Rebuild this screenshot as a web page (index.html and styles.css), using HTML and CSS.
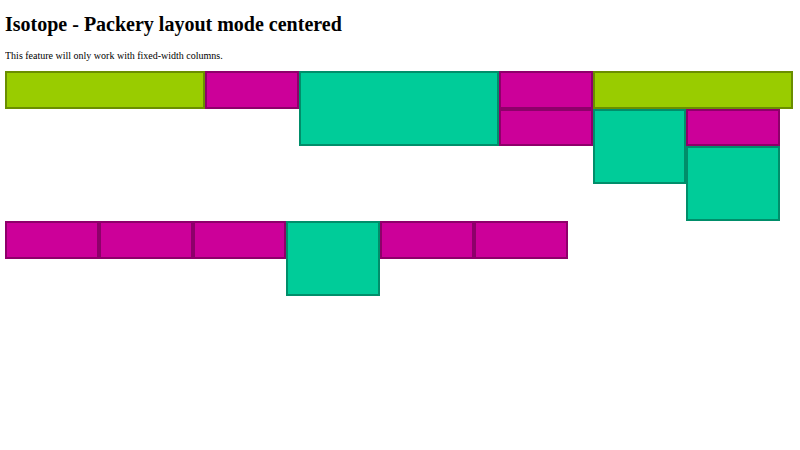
FILE: index.html
```html
<!DOCTYPE html>
<html>
<head>
<meta charset="utf-8">
<title>Isotope - Packery layout mode centered</title>
<link rel="stylesheet" href="styles.css">
</head>
<body>
<h1 class="title">Isotope - Packery layout mode centered</h1>
<p class="note">This feature will only work with fixed-width columns.</p>
<div class="grid">
  <div class="item green c1 r1"></div>
  <div class="item magenta c2 r1"></div>
  <div class="item teal tall c3 r1"></div>
  <div class="item magenta c4 r1"></div>
  <div class="item green wide c5 r1"></div>
  <div class="item magenta c4 r2"></div>
  <div class="item teal tall c5 r2"></div>
  <div class="item magenta c6 r2"></div>
  <div class="item teal tall c6 r3"></div>
</div>
<div class="row">
  <div class="item magenta small"></div>
  <div class="item magenta small"></div>
  <div class="item magenta small"></div>
  <div class="item teal small tallbox"></div>
  <div class="item magenta small"></div>
  <div class="item magenta small"></div>
</div>
</body>
</html>
```
FILE: styles.css
```css
html, body {
  background: #fff;
}
body {
  margin: 5px;
  font-family: "Liberation Serif", "Times New Roman", serif;
  color: #000;
}
.title {
  font-size: 20px;
  font-weight: bold;
  margin: 8.4px 0 13.4px;
  line-height: 23px;
}
.note {
  font-size: 10px;
  line-height: 11.5px;
  margin: 10px 0;
}
.grid {
  display: grid;
  grid-template-columns: 200px 93.75px 200px 93.75px 93.75px 93.75px 12.5px;
  grid-template-rows: repeat(4, 37.5px);
}
.item {
  box-sizing: border-box;
  border: 2px solid rgba(0, 0, 0, 0.3);
}
.green { background: #99cc00; }
.magenta { background: #cc0099; }
.teal { background: #00cc99; }
.c1 { grid-column: 1; }
.c2 { grid-column: 2; }
.c3 { grid-column: 3; }
.c4 { grid-column: 4; }
.c5 { grid-column: 5; }
.c6 { grid-column: 6; }
.wide { grid-column: 5 / 8; }
.r1.tall { grid-row: 1 / 3; }
.r2.tall { grid-row: 2 / 4; }
.r3.tall { grid-row: 3 / 5; }
.r1 { grid-row-start: 1; }
.r2 { grid-row-start: 2; }
.r3 { grid-row-start: 3; }
.row {
  display: flex;
  align-items: flex-start;
  height: 75px;
}
.small {
  width: 93.75px;
  height: 37.5px;
  flex: none;
}
.tallbox {
  height: 75px;
}
```
